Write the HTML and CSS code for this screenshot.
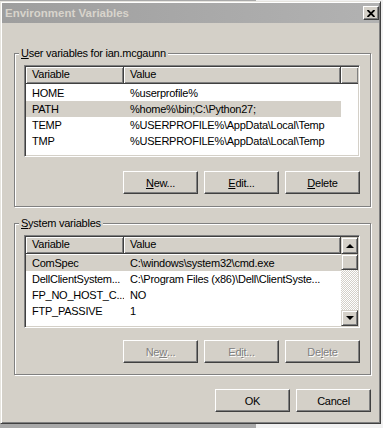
FILE: index.html
```html
<!DOCTYPE html>
<html lang="en">
<head>
    <meta charset="UTF-8" />
    <title>Environment Variables</title>
    <link rel="stylesheet" href="styles.css">
</head>
<body>
<div class="screen">
    <div class="window">
        <div class="titlebar">
            <span class="title">Environment Variables</span>
            <span class="close">
                <svg width="8" height="7" viewBox="0 0 8 7"><path d="M0.5 0 L7.5 7 M7.5 0 L0.5 7" stroke="#000" stroke-width="1.9" fill="none"/></svg>
            </span>
        </div>
        <div class="content">
            <div class="group user">
                <div class="legend"><u>U</u>ser variables for ian.mcgaunn</div>
                <div class="list">
                    <div class="table">
                        <div class="head">
                            <div class="hcell c1">Variable</div>
                            <div class="hcell c2">Value</div>
                            <div class="hcell filler"></div>
                        </div>
                        <div class="rows">
                            <div class="row"><div class="cell c1">HOME</div><div class="cell c2">%userprofile%</div></div>
                            <div class="row sel"><div class="cell c1">PATH</div><div class="cell c2">%home%\bin;C:\Python27;</div></div>
                            <div class="row"><div class="cell c1">TEMP</div><div class="cell c2">%USERPROFILE%\AppData\Local\Temp</div></div>
                            <div class="row"><div class="cell c1">TMP</div><div class="cell c2">%USERPROFILE%\AppData\Local\Temp</div></div>
                        </div>
                    </div>
                </div>
                <div class="buttons">
                    <span class="btn"><u>N</u>ew...</span>
                    <span class="btn"><u>E</u>dit...</span>
                    <span class="btn"><u>D</u>elete</span>
                </div>
            </div>

            <div class="group system">
                <div class="legend"><u>S</u>ystem variables</div>
                <div class="list">
                    <div class="table">
                        <div class="head">
                            <div class="hcell c1">Variable</div>
                            <div class="hcell c2">Value</div>
                        </div>
                        <div class="rows">
                            <div class="row sel"><div class="cell c1">ComSpec</div><div class="cell c2">C:\windows\system32\cmd.exe</div></div>
                            <div class="row"><div class="cell c1">DellClientSystem...</div><div class="cell c2">C:\Program Files (x86)\Dell\ClientSyste...</div></div>
                            <div class="row"><div class="cell c1">FP_NO_HOST_C...</div><div class="cell c2">NO</div></div>
                            <div class="row"><div class="cell c1">FTP_PASSIVE</div><div class="cell c2">1</div></div>
                        </div>
                    </div>
                    <div class="scrollbar">
                        <div class="sb-btn up"><span class="arrow-up"></span></div>
                        <div class="sb-thumb"></div>
                        <div class="sb-track"></div>
                        <div class="sb-btn down"><span class="arrow-down"></span></div>
                    </div>
                </div>
                <div class="buttons">
                    <span class="btn disabled">Ne<u>w</u>...</span>
                    <span class="btn disabled">Ed<u>i</u>t...</span>
                    <span class="btn disabled">De<u>l</u>ete</span>
                </div>
            </div>

            <div class="buttons footer">
                <span class="btn">OK</span>
                <span class="btn">Cancel</span>
            </div>
        </div>
    </div>
</div>
</body>
</html>
```

FILE: styles.css
```css
body {
    margin: 0;
    font-family: "Liberation Sans", Arial, sans-serif;
    font-size: 11px;
    letter-spacing: -0.25px;
    color: #000;
}
.screen {
    width: 383px;
    height: 428px;
    overflow: hidden;
    background: linear-gradient(to right, #a9a9a9 256px, #f1f1f1 256px);
}
.window {
    width: 381px;
    height: 423px;
    margin-top: 1px;
    box-sizing: border-box;
    padding: 1px;
    background: #d4d0c8;
    border: 1px solid;
    border-color: #e6e4de #404040 #404040 #e6e4de;
    box-shadow: inset 1px 1px #fff, inset -1px -1px #808080;
}

/* title bar */
.titlebar {
    height: 20px;
    display: flex;
    align-items: center;
    justify-content: space-between;
    padding-left: 3px;
    background: linear-gradient(to right, #9e9e9e, #b2b2b2);
}
.title {
    font-weight: bold;
    font-size: 11.5px;
    letter-spacing: 0;
    color: #d8d4cc;
}
.close {
    width: 16px;
    height: 14px;
    box-sizing: border-box;
    display: flex;
    align-items: center;
    justify-content: center;
    background: #d4d0c8;
    border: 1px solid;
    border-color: #fff #404040 #404040 #fff;
    box-shadow: inset -1px -1px #808080;
}

/* body */
.content {
    padding: 30px 0 0 12px;
}
.group {
    width: 357px;
    box-sizing: border-box;
    border: 1px solid #808080;
    box-shadow: inset 1px 1px #fff, 1px 1px #fff;
    padding: 0 10px 12px 9px;
}
.group.system {
    margin-top: 16px;
    padding-bottom: 11px;
}
.legend {
    display: table;
    margin: -7px 0 0 -5px;
    padding: 0 2px;
    line-height: 13px;
    background: #d4d0c8;
}
u {
    text-decoration: underline;
    text-underline-offset: 1px;
}

/* list views */
.list {
    display: flex;
    height: 92px;
    margin-top: 5px;
    box-sizing: border-box;
    padding: 1px;
    overflow: hidden;
    background: #fff;
    border: 1px solid;
    border-color: #808080 #fff #fff #808080;
    box-shadow: inset 1px 1px #404040, inset -1px -1px #d4d0c8;
}
.system .list {
    height: 93px;
}
.table {
    flex: 1;
    min-width: 0;
    overflow: hidden;
}
.head {
    display: flex;
    height: 17px;
}
.hcell {
    box-sizing: border-box;
    height: 17px;
    line-height: 15px;
    padding-left: 6px;
    background: #d4d0c8;
    border-right: 1px solid #404040;
    border-bottom: 1px solid #404040;
    box-shadow: inset 1px 1px #fff, inset -1px -1px #808080;
}
.hcell.filler {
    flex: 1;
    border-right: 0;
}
.c1 { width: 98px; flex: none; }
.c2 { width: 217px; flex: none; }
.rows {
    margin-top: 1px;
}
.row {
    display: flex;
    width: 315px;
    height: 16px;
    line-height: 16px;
}
.row.sel {
    background: #d4d0c8;
}
.cell {
    box-sizing: border-box;
    padding-left: 6px;
    white-space: nowrap;
    overflow: hidden;
}

/* scrollbar */
.scrollbar {
    width: 17px;
    flex: none;
    display: flex;
    flex-direction: column;
}
.sb-btn, .sb-thumb {
    box-sizing: border-box;
    background: #d4d0c8;
    border: 1px solid;
    border-color: #d4d0c8 #404040 #404040 #d4d0c8;
    box-shadow: inset 1px 1px #fff, inset -1px -1px #808080;
}
.sb-btn {
    height: 17px;
    display: flex;
    align-items: center;
    justify-content: center;
}
.sb-btn.down {
    height: 16px;
}
.sb-thumb {
    height: 16px;
}
.sb-track {
    flex: 1;
    background: repeating-conic-gradient(#fff 0 25%, #d4d0c8 0 50%) 0 0 / 2px 2px;
}
.arrow-up, .arrow-down {
    width: 0;
    height: 0;
    border-left: 4px solid transparent;
    border-right: 4px solid transparent;
}
.arrow-up {
    border-bottom: 4px solid #000;
}
.arrow-down {
    border-top: 4px solid #000;
}

/* buttons */
.buttons {
    display: flex;
    justify-content: flex-end;
    gap: 6px;
    margin-top: 14px;
}
.system .buttons {
    margin-top: 12px;
}
.buttons.footer {
    width: 357px;
    margin-top: 14px;
}
.btn {
    width: 75px;
    height: 23px;
    box-sizing: border-box;
    display: flex;
    align-items: center;
    justify-content: center;
    background: #d4d0c8;
    border: 1px solid;
    border-color: #fff #404040 #404040 #fff;
    box-shadow: inset -1px -1px #808080;
}
.btn.disabled {
    color: #808080;
    text-shadow: 1px 1px 0 #fff;
}
```
